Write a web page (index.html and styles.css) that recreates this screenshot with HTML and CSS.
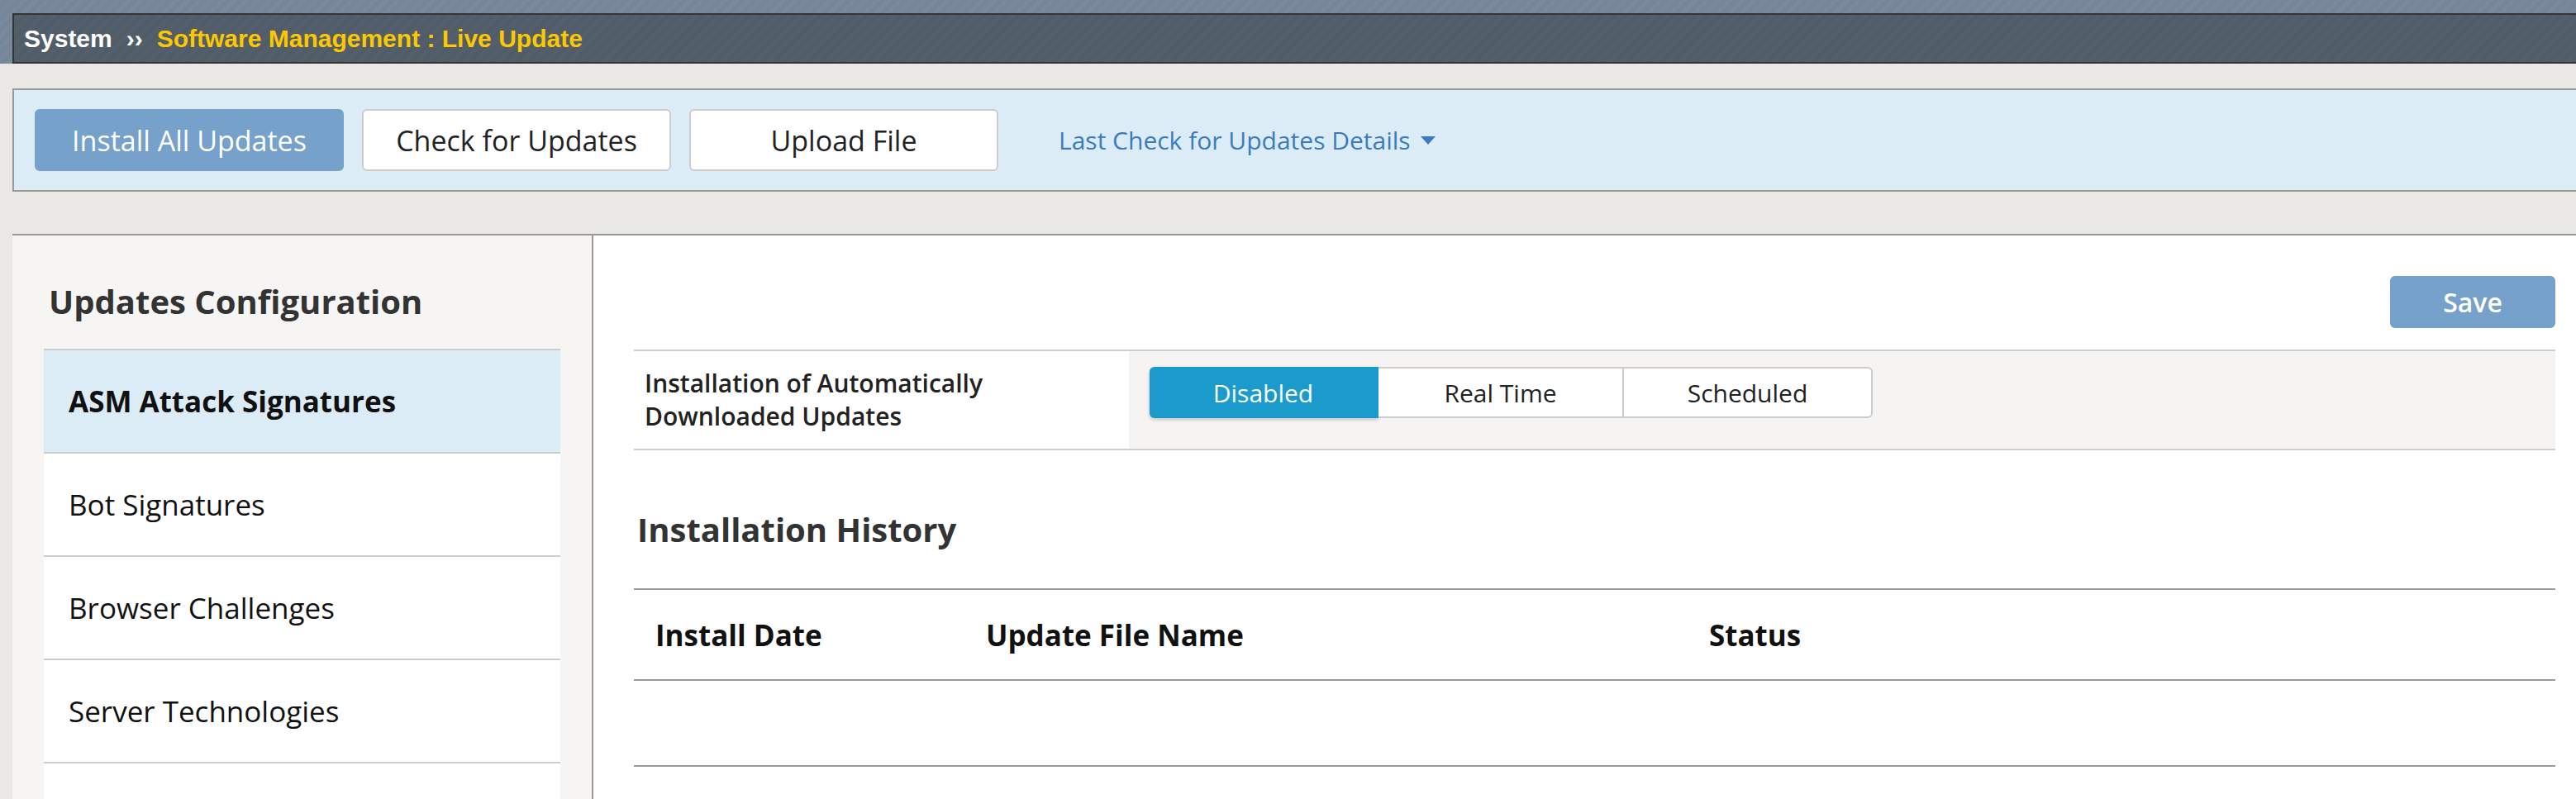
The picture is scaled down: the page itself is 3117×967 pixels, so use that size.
FILE: index.html
```html
<!DOCTYPE html>
<html lang="en">
<head>
    <meta charset="UTF-8">
    <meta name="viewport" content="width=device-width, initial-scale=1.0">
    <title>Software Management : Live Update</title>
    <link rel="stylesheet" href="styles.css">
</head>
<body>
    <div class="topband">
        <div class="crumbs">
            <span class="crumb-root">System</span>
            <span class="crumb-sep">&rsaquo;&rsaquo;</span>
            <span class="crumb-page">Software Management : Live Update</span>
        </div>
    </div>

    <div class="page">
        <div class="toolbar">
            <button class="btn btn-primary btn-wide">Install All Updates</button>
            <button class="btn btn-wide">Check for Updates</button>
            <button class="btn btn-wide">Upload File</button>
            <a class="details-link" href="#">Last Check for Updates Details
                <svg class="caret" width="18" height="10" viewBox="0 0 18 10"><path d="M0 0H18L9 10Z" fill="currentColor"/></svg>
            </a>
        </div>

        <div class="main">
            <aside class="sidebar">
                <h3 class="sidebar-title">Updates Configuration</h3>
                <ul class="nav">
                    <li class="active">ASM Attack Signatures</li>
                    <li>Bot Signatures</li>
                    <li>Browser Challenges</li>
                    <li>Server Technologies</li>
                    <li class="filler"></li>
                </ul>
            </aside>

            <section class="content">
                <div class="actions">
                    <button class="btn btn-primary btn-save">Save</button>
                </div>

                <div class="setting-row">
                    <div class="setting-label">Installation of Automatically<br>Downloaded Updates</div>
                    <div class="setting-value">
                        <div class="toggle">
                            <button class="on">Disabled</button>
                            <button>Real Time</button>
                            <button>Scheduled</button>
                        </div>
                    </div>
                </div>

                <h3 class="section-title">Installation History</h3>
                <table class="history">
                    <thead>
                        <tr>
                            <th class="col-date">Install Date</th>
                            <th class="col-file">Update File Name</th>
                            <th>Status</th>
                        </tr>
                    </thead>
                    <tbody>
                        <tr><td></td><td></td><td></td></tr>
                    </tbody>
                </table>
            </section>
        </div>
    </div>
</body>
</html>
```
FILE: styles.css
```css
body {
    margin: 0;
    height: 100vh;
    overflow: hidden;
    display: flex;
    flex-direction: column;
    font-family: "Open Sans", Arial, sans-serif;
    background-color: #e9e8e4;
    color: #222;
}

/* header strip */
.topband {
    padding: 16px 0 0 15px;
    background: repeating-linear-gradient(-45deg, #76859a 0 5px, #798a9d 5px 10px);
}
.crumbs {
    height: 57px;
    display: flex;
    align-items: center;
    gap: 17px;
    padding-left: 12px;
    border: 2px solid #333;
    border-right: none;
    background: repeating-linear-gradient(-45deg, #515c69 0 5px, #545f6c 5px 10px);
    font-family: "Liberation Sans", Arial, sans-serif;
    font-weight: bold;
    font-size: 30px;
}
.crumb-root, .crumb-sep {
    color: #fff;
}
.crumb-page {
    color: #fcc800;
}

.page {
    flex: 1;
    display: flex;
    flex-direction: column;
    padding: 30px 0 0 15px;
    min-height: 0;
}

/* toolbar */
.toolbar {
    display: flex;
    align-items: center;
    gap: 22px;
    padding: 23px 25px;
    background: #dbecf6;
    border: 2px solid #999;
    border-right: none;
}
.btn {
    font-family: "Open Sans", Arial, sans-serif;
    font-size: 34px;
    color: #222;
    background: #fff;
    border: 2px solid #ccc;
    border-radius: 6px;
    cursor: pointer;
    padding: 0;
}
.btn-wide {
    width: 374px;
    height: 75px;
}
.btn-primary {
    background: #76a1ca;
    border-color: #76a1ca;
    color: #fff;
}
.details-link {
    margin-left: 51px;
    font-size: 30px;
    color: #3a7cbd;
    text-decoration: none;
    display: flex;
    align-items: center;
    gap: 12px;
}

/* main panel */
.main {
    flex: 1;
    display: flex;
    margin-top: 51px;
    border-top: 2px solid #999;
    min-height: 0;
}
.sidebar {
    width: 625px;
    padding: 0 38px;
    display: flex;
    flex-direction: column;
    background: #f6f5f3;
    border-right: 2px solid #999;
}
.sidebar-title {
    margin: 0;
    padding: 52px 0 0 6px;
    height: 85px;
    flex-shrink: 0;
    font-size: 40px;
    font-weight: bold;
    color: #333;
}
.nav {
    flex: 1;
    display: flex;
    flex-direction: column;
    list-style: none;
    margin: 0;
    padding: 0;
    border-top: 2px solid #ccc;
}
.nav li {
    height: 123px;
    flex-shrink: 0;
    display: flex;
    align-items: center;
    padding-left: 30px;
    background: #fff;
    border-bottom: 2px solid #ccc;
    font-size: 35px;
    color: #111;
}
.nav li.active {
    background: #dbecf6;
    font-weight: bold;
}
.nav li.filler {
    flex: 1;
    height: auto;
    border-bottom: none;
}

.content {
    flex: 1;
    background: #fff;
    padding: 49px 25px 0 49px;
}
.actions {
    display: flex;
    justify-content: flex-end;
    height: 89px;
}
.btn-save {
    width: 200px;
    height: 63px;
    font-size: 32px;
    font-weight: 600;
}

/* automatic installation setting */
.setting-row {
    display: flex;
    border-top: 2px solid #ccc;
    border-bottom: 2px solid #ccc;
}
.setting-label {
    width: 586px;
    padding: 10px 0 10px 13px;
    display: flex;
    align-items: center;
    font-size: 30px;
    font-weight: 600;
    line-height: 40px;
}
.setting-value {
    flex: 1;
    background: #f5f4f2;
    padding: 19px 25px 37px;
}
.toggle {
    display: inline-flex;
    height: 62px;
}
.toggle button {
    font-family: "Open Sans", Arial, sans-serif;
    font-size: 30px;
    color: #222;
    background: #fff;
    border: 2px solid #ccc;
    border-left: none;
    width: 297px;
    padding: 0;
}
.toggle button.on {
    width: 277px;
    background: #1a9bcc;
    border-color: #1a9bcc;
    color: #fff;
    border-radius: 6px 0 0 6px;
    box-shadow: 0 2px 4px rgba(0, 0, 0, 0.2);
}
.toggle button:last-child {
    width: 301px;
    border-radius: 0 6px 6px 0;
}

/* history table */
.section-title {
    margin: 0;
    height: 167px;
    padding: 68px 0 0 4px;
    box-sizing: border-box;
    font-size: 40px;
    font-weight: bold;
    color: #333;
}
.history {
    width: 100%;
    border-collapse: collapse;
}
.history th {
    height: 108px;
    padding: 0 26px;
    text-align: left;
    font-size: 35px;
    font-weight: bold;
    color: #111;
    border-top: 2px solid #999;
    border-bottom: 2px solid #999;
}
.history td {
    height: 100px;
    border-bottom: 2px solid #999;
}
.col-date {
    width: 348px;
}
.col-file {
    width: 823px;
}
```
